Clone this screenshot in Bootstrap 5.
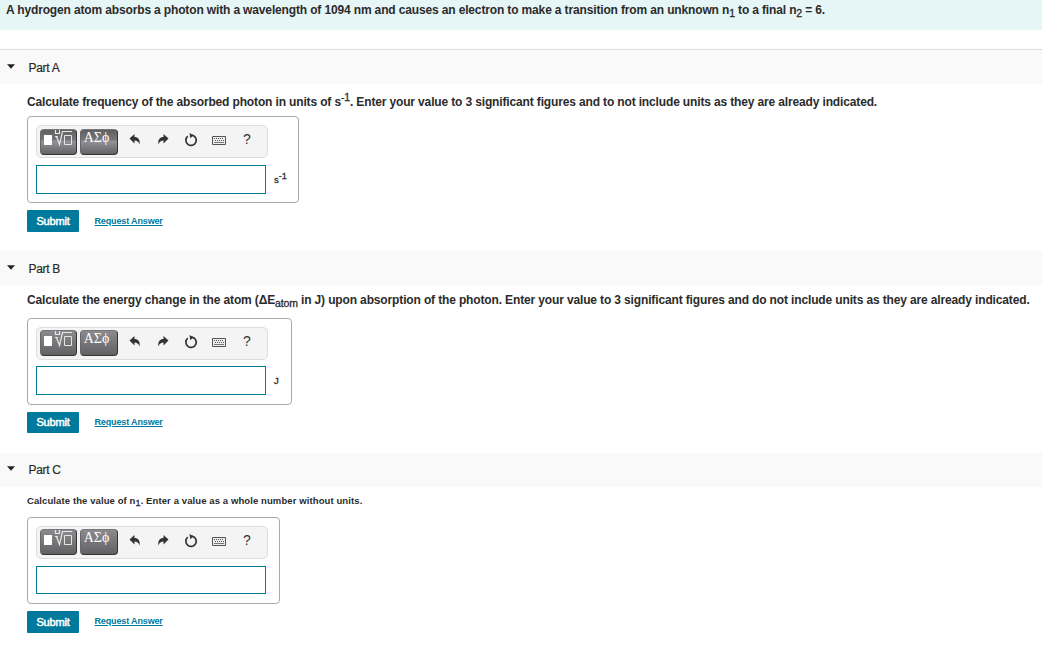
<!DOCTYPE html>
<html lang="en">
<head>
  <meta charset="UTF-8">
  <meta name="viewport" content="width=device-width, initial-scale=1">
  <title>Hydrogen photon absorption</title>
  <link href="https://cdn.jsdelivr.net/npm/bootstrap@5.3.3/dist/css/bootstrap.min.css" rel="stylesheet">
  <style>
    body {
      font-family: "Liberation Sans", Arial, sans-serif;
      font-size: 12px;
      line-height: 16px;
      color: #2b2b2b;
      overflow: hidden;
    }
    sub, sup {
      font-size: 10.5px;
      font-weight: normal;
      line-height: 0;
      -webkit-text-stroke: .3px;
    }
    .intro {
      height: 30px;
      padding: 2px 6px;
      background: #e6f6f7;
    }
    .intro, .prompt {
      font-weight: bold;
      letter-spacing: -.145px;
      white-space: nowrap;
    }
    .parts {
      margin-top: 19px;
      border-top: 1px solid #ddd;
    }
    .part {
      height: 202px;
    }
    .part:first-child {
      height: 201px;
    }
    .part-head {
      height: 34px;
      padding: 2px 0 0 7px;
      background: #f9f9f9;
      letter-spacing: -.3px;
      -webkit-text-stroke: .2px;
    }
    .part:last-child .part-head {
      padding-top: 0;
    }
    .caret {
      width: 8px;
      height: 5px;
      margin-top: -3px;
      margin-right: 13.5px;
    }
    .prompt {
      height: 32px;
      padding-top: 10px;
    }
    .prompt-b {
      height: 33px;
      padding-top: 7px;
      letter-spacing: -.14px;
    }
    .prompt-c {
      height: 30px;
      padding-top: 6px;
      font-size: 9.5px;
      letter-spacing: .1px;
    }
    .prompt-c sub {
      font-size: 9px;
    }
    .part-body {
      padding-left: 27px;
    }
    .answer-box {
      width: 272px;
      height: 87px;
      padding: 8px;
      border: 1px solid #a9a9a9;
      border-radius: 4px;
    }
    .box-b { width: 265px; }
    .box-c { width: 253px; }
    .tools {
      width: 232px;
      height: 33px;
      margin-bottom: 7px;
      padding: 0 3px;
      background: #f4f4f4;
      border: 1px solid #ddd;
      border-radius: 5px;
    }
    .box-b .tools { margin-bottom: 6px; }
    .key {
      width: 37px;
      height: 26px;
      margin-top: -1px;
      margin-right: 3px;
      padding: 0;
      color: #fff;
      background: linear-gradient(#8b8b8f, #626264);
      border: 1px solid #333;
      border-top-color: #77777a;
      border-left-color: #68686a;
      border-radius: 4px;
    }
    .box-a .key {
      margin-top: 0;
      background: linear-gradient(#5f5f61, #78787b 42%, #929299 46%, #646466);
    }
    .key-greek {
      width: 38px;
      margin-right: 2px;
      padding-right: 5px;
      padding-bottom: 8px;
      font: 14px/14px "Liberation Serif", serif;
    }
    .key svg {
      display: block;
    }
    .tool {
      width: 28.1px;
      height: 20px;
      margin-top: -3px;
      padding: 0 0 0 1px;
      color: #333;
      background: none;
      border: 0;
    }
    .tool svg {
      display: block;
      margin: auto;
    }
    .help {
      font-size: 14px;
      line-height: 18px;
      padding-bottom: 2px;
    }
    .answer-input {
      width: 230px;
      height: 29px;
      border: 1px solid #007a9c;
      border-radius: 0;
      padding: 0 4px;
    }
    .box-c .answer-input { height: 28px; }
    .unit {
      margin-left: 8px;
      font-size: 9.5px;
      -webkit-text-stroke: .3px;
    }
    .unit sup {
      font-size: 9px;
      top: -.4em;
    }
    .actions {
      margin-top: 7px;
    }
    .submit {
      width: 52px;
      height: 22px;
      padding: 0;
      font-size: 11px;
      letter-spacing: -.2px;
      line-height: 20px;
      color: #fff;
      -webkit-text-stroke: .5px;
      background: #007a9c;
      border: 0;
      border-radius: 1px;
    }
    .box-b + .actions .submit {
      height: 21px;
      padding-bottom: 1px;
    }
    .box-c + .actions .submit {
      padding-bottom: 1px;
    }
    .request {
      margin-left: 15.5px;
      font-size: 9px;
      font-weight: bold;
      letter-spacing: -.14px;
      color: #007a9c;
      white-space: nowrap;
    }
    .box-b + .actions .request,
    .box-c + .actions .request {
      padding-bottom: 2px;
    }
  </style>
</head>

<body>

  <!-- Shared toolbar icons -->
  <svg class="d-none" xmlns="http://www.w3.org/2000/svg">
    <symbol id="i-caret" viewBox="0 0 8 5"><path d="M0 .3h8L4 4.7z" fill="#222"/></symbol>
    <symbol id="i-template" viewBox="0 0 35 24">
      <path d="M3 5h8v10H3z" fill="#fff"/>
      <path d="M14.500 0v3.500h4V0M14 6.500h3M15.500 6.500l3 8 3-13h9.500" fill="none" stroke="#e8e8e8" stroke-width="1.200"/>
      <path d="M23.500 5.500h7v9h-7z" fill="none" stroke="#e4e4e4"/>
    </symbol>
    <symbol id="i-undo" viewBox="0 0 12 12"><path d="M0.500 4.500 5.500 0v3C9 3 11.500 5.500 10.500 10.500 9.500 7.500 8 6.500 5.500 6.500v3z" fill="#333"/></symbol>
    <symbol id="i-redo" viewBox="0 0 12 12"><path d="M11.500 4.500 6.500 0v3C3 3 .500 5.500 1.500 10.500 2.500 7.500 4 6.500 6.500 6.500v3z" fill="#333"/></symbol>
    <symbol id="i-reset" viewBox="0 0 14 14">
      <path d="M3.800 3.200A5.200 5.200 0 1 0 7.800 2.100" fill="none" stroke="#333" stroke-width="1.700"/>
      <path d="M5.500 0 9.500 2.300 6.300 5.200z" fill="#333"/>
    </symbol>
    <symbol id="i-keyboard" viewBox="0 0 14 9">
      <path d="M.500.500h13v8H.500z" fill="#eee" stroke="#555"/>
      <path d="M2 2.500h10M3 4.500h9" stroke="#555" stroke-dasharray="1 1"/>
      <path d="M2 6.500h10" stroke="#777"/>
    </symbol>
  </svg>

  <div class="intro">
    <span>A hydrogen atom absorbs a photon with a wavelength of 1094 nm and causes an electron to make a transition from an unknown n<sub>1</sub> to a final n<sub>2</sub> = 6.</span>
  </div>

  <div class="parts">

    <!-- Part A -->
    <section class="part">
      <div class="part-head d-flex align-items-center"><svg class="caret"><use href="#i-caret"/></svg><span>Part A</span></div>
      <div class="part-body">
        <div class="prompt"><span>Calculate frequency of the absorbed photon in units of s<sup>-1</sup>. Enter your value to 3 significant figures and to not include units as they are already indicated.</span></div>
        <div class="answer-box box-a">
          <div class="tools d-flex align-items-center">
            <button class="key"><svg width="35" height="24"><use href="#i-template"/></svg></button>
            <button class="key key-greek">ΑΣϕ</button>
            <button class="tool"><svg width="12" height="12"><use href="#i-undo"/></svg></button>
            <button class="tool"><svg width="12" height="12"><use href="#i-redo"/></svg></button>
            <button class="tool"><svg width="14" height="14"><use href="#i-reset"/></svg></button>
            <button class="tool"><svg width="14" height="9"><use href="#i-keyboard"/></svg></button>
            <button class="tool help">?</button>
          </div>
          <div class="d-flex align-items-center">
            <input type="text" class="answer-input" aria-label="Frequency">
            <span class="unit">s<sup>-1</sup></span>
          </div>
        </div>
        <div class="actions d-flex align-items-center">
          <button class="submit">Submit</button>
          <a href="#" class="request">Request Answer</a>
        </div>
      </div>
    </section>

    <!-- Part B -->
    <section class="part">
      <div class="part-head d-flex align-items-center"><svg class="caret"><use href="#i-caret"/></svg><span>Part B</span></div>
      <div class="part-body">
        <div class="prompt prompt-b"><span>Calculate the energy change in the atom (ΔE<sub>atom</sub> in J) upon absorption of the photon. Enter your value to 3 significant figures and do not include units as they are already indicated.</span></div>
        <div class="answer-box box-b">
          <div class="tools d-flex align-items-center">
            <button class="key"><svg width="35" height="24"><use href="#i-template"/></svg></button>
            <button class="key key-greek">ΑΣϕ</button>
            <button class="tool"><svg width="12" height="12"><use href="#i-undo"/></svg></button>
            <button class="tool"><svg width="12" height="12"><use href="#i-redo"/></svg></button>
            <button class="tool"><svg width="14" height="14"><use href="#i-reset"/></svg></button>
            <button class="tool"><svg width="14" height="9"><use href="#i-keyboard"/></svg></button>
            <button class="tool help">?</button>
          </div>
          <div class="d-flex align-items-center">
            <input type="text" class="answer-input" aria-label="Energy change">
            <span class="unit">J</span>
          </div>
        </div>
        <div class="actions d-flex align-items-center">
          <button class="submit">Submit</button>
          <a href="#" class="request">Request Answer</a>
        </div>
      </div>
    </section>

    <!-- Part C -->
    <section class="part">
      <div class="part-head d-flex align-items-center"><svg class="caret"><use href="#i-caret"/></svg><span>Part C</span></div>
      <div class="part-body">
        <div class="prompt prompt-c"><span>Calculate the value of n<sub>1</sub>. Enter a value as a whole number without units.</span></div>
        <div class="answer-box box-c">
          <div class="tools d-flex align-items-center">
            <button class="key"><svg width="35" height="24"><use href="#i-template"/></svg></button>
            <button class="key key-greek">ΑΣϕ</button>
            <button class="tool"><svg width="12" height="12"><use href="#i-undo"/></svg></button>
            <button class="tool"><svg width="12" height="12"><use href="#i-redo"/></svg></button>
            <button class="tool"><svg width="14" height="14"><use href="#i-reset"/></svg></button>
            <button class="tool"><svg width="14" height="9"><use href="#i-keyboard"/></svg></button>
            <button class="tool help">?</button>
          </div>
          <input type="text" class="answer-input d-block" aria-label="Value of n1">
        </div>
        <div class="actions d-flex align-items-center">
          <button class="submit">Submit</button>
          <a href="#" class="request">Request Answer</a>
        </div>
      </div>
    </section>

  </div>

  <script src="https://cdn.jsdelivr.net/npm/bootstrap@5.3.3/dist/js/bootstrap.bundle.min.js"></script>
</body>
</html>
